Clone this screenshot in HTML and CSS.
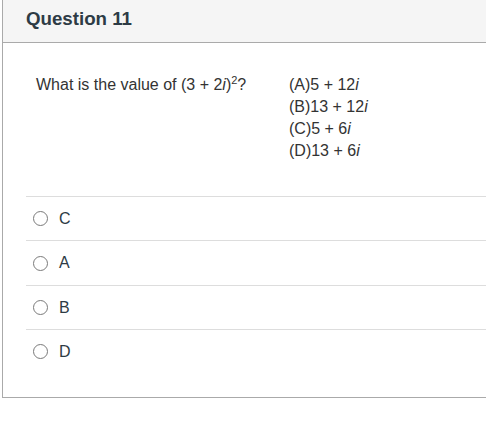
FILE: index.html
```html
<!DOCTYPE html>
<html>
<head>
<meta charset="utf-8">
<link rel="stylesheet" href="styles.css">
</head>
<body>
<div class="quiz">
  <div class="header"><h2 class="title">Question 11</h2></div>
  <div class="content">
    <div class="question">
      <div class="qtext">What is the value of (3 + 2<i>i</i>)<sup>2</sup>?</div>
      <div class="opts">
        <div>(A)5 + 12<i>i</i></div>
        <div>(B)13 + 12<i>i</i></div>
        <div>(C)5 + 6<i>i</i></div>
        <div>(D)13 + 6<i>i</i></div>
      </div>
    </div>
    <div class="answers">
      <label class="answer"><span class="radio"></span><span class="label">C</span></label>
      <label class="answer"><span class="radio"></span><span class="label">A</span></label>
      <label class="answer"><span class="radio"></span><span class="label">B</span></label>
      <label class="answer"><span class="radio"></span><span class="label">D</span></label>
    </div>
  </div>
</div>
</body>
</html>
```
FILE: styles.css
```css
html, body {
  margin: 0;
  padding: 0;
  background: #fff;
}
body {
  font-family: "Liberation Sans", Arial, sans-serif;
  color: #2d3b45;
}
.quiz {
  margin-left: 2px;
  border-left: 1px solid #aaaaaa;
  border-bottom: 1px solid #aaaaaa;
}
.header {
  background: #f5f5f5;
  border-bottom: 1px solid #aaaaaa;
  box-sizing: border-box;
  height: 43px;
  padding-left: 23px;
  display: flex;
  align-items: center;
}
.title {
  margin: 0;
  font-size: 18.7px;
  font-weight: bold;
  color: #2d3b45;
  line-height: 1;
  padding-bottom: 4px;
}
.content {
  padding: 31px 0 24px 23px;
}
.question {
  display: flex;
  padding-left: 10px;
  padding-bottom: 34px;
  font-size: 16px;
  line-height: 22px;
  color: #333;
}
.qtext {
  width: 253px;
}
.qtext sup {
  font-size: 11px;
  line-height: 0;
}
.answers {
  display: flex;
  flex-direction: column;
}
.answer {
  display: flex;
  align-items: center;
  height: 44px;
  border-top: 1px solid #dddddd;
  box-sizing: border-box;
  font-size: 16px;
  color: #2d3b45;
}
.answer:nth-child(2) {
  height: 45px;
}
.radio {
  width: 15px;
  height: 15px;
  border: 1px solid #7a7a7a;
  border-radius: 50%;
  margin-left: 7px;
  margin-right: 11px;
  box-sizing: border-box;
  flex: none;
}
```
